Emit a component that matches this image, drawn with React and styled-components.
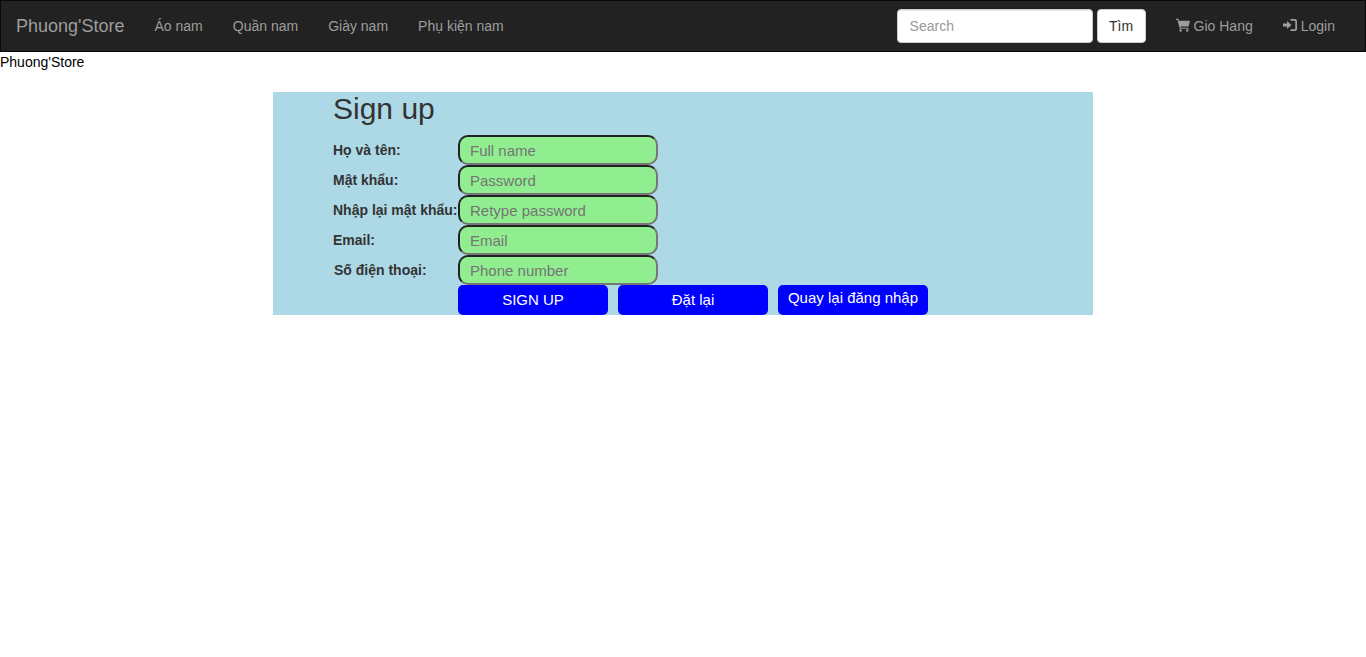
import React from 'react'
import styled, { createGlobalStyle } from 'styled-components'

const GlobalStyle = createGlobalStyle`
  * {
    box-sizing: border-box;
  }
  body {
    margin: 0;
    background: #fff;
    color: #333;
    font-family: "Liberation Sans", Arial, sans-serif;
    font-size: 14px;
    line-height: 20px;
  }
`

const Navbar = styled.nav`
  display: flex;
  align-items: center;
  height: 52px;
  padding-right: 15px;
  background: #222;
  border: 1px solid #080808;
`

const Brand = styled.a`
  padding: 15px;
  font-size: 18px;
  color: #9d9d9d;
`

const NavLink = styled.a`
  display: flex;
  align-items: center;
  gap: 4px;
  padding: 15px;
  color: #9d9d9d;
`

const NavGroup = styled.div`
  display: flex;
  align-items: center;
`

const RightGroup = styled(NavGroup)`
  margin-left: auto;
`

const SearchForm = styled.form`
  display: flex;
  gap: 4px;
  margin-right: 15px;
`

const SearchInput = styled.input`
  width: 196px;
  height: 34px;
  padding: 6px 12px;
  font: inherit;
  color: #555;
  background: #fff;
  border: 1px solid #ccc;
  border-radius: 4px;
  box-shadow: inset 0 1px 1px rgba(0, 0, 0, 0.075);

  &::placeholder {
    color: #999;
    opacity: 1;
  }
`

const SearchButton = styled.button`
  width: 49px;
  height: 34px;
  padding: 0;
  font: inherit;
  color: #333;
  background: #fff;
  border: 1px solid #ccc;
  border-radius: 4px;
`

const PageTitle = styled.div`
  color: #000;
  margin-bottom: 20px;
`

const Card = styled.section`
  width: 820px;
  margin-left: 273px;
  padding-left: 60px;
  background: lightblue;
`

const Heading = styled.h2`
  margin: 0 0 10px;
  font-size: 30px;
  font-weight: 500;
  line-height: 33px;
`

const Row = styled.div`
  display: flex;
  align-items: center;
  height: 30px;
`

const Label = styled.label`
  width: 125px;
  padding-left: ${props => props.$indent || 0}px;
  font-weight: 700;
  white-space: nowrap;
`

const Field = styled.input`
  width: 200px;
  height: 30px;
  padding: 1px 10px 0;
  font-family: inherit;
  font-size: 15px;
  background: lightgreen;
  border: 2px inset #767676;
  border-radius: 10px;

  &::placeholder {
    color: #757575;
    opacity: 1;
  }
`

const Actions = styled.div`
  display: flex;
  gap: 10px;
  padding-left: 125px;
`

const ActionButton = styled.button`
  width: 150px;
  height: 30px;
  padding: 0 0 ${props => (props.$raised ? 6 : 2)}px;
  font-family: inherit;
  font-size: 15px;
  color: #fff;
  background: blue;
  border: 0;
  border-radius: 5px;
`

const Glyph = styled.svg`
  width: 14px;
  height: 14px;
  margin-bottom: 2px;
  fill: currentColor;
`

const CartIcon = () => (
  <Glyph viewBox="0 0 14 14">
    <path d="M0 .8h2.300l.6 2H14l-1.500 5.700H4.500l.3 1.200h8v1.100H3.700L1.500 1.900H0z" />
    <circle cx="4.600" cy="12.500" r="1.200" />
    <circle cx="11.200" cy="12.500" r="1.200" />
  </Glyph>
)

const LoginIcon = () => (
  <Glyph viewBox="0 0 14 14">
    <path d="M0 5.600h4V3l4.400 4L4 11V8.400H0z" />
    <path d="M7.500 1H12a2 2 0 0 1 2 2v8a2 2 0 0 1-2 2H7.500v-1.700H11.500a.8.8 0 0 0 .8-.8V3.500a.8.8 0 0 0-.8-.8H7.500z" />
  </Glyph>
)

const navItems = ['Áo nam', 'Quần nam', 'Giày nam', 'Phụ kiện nam']

const fields = [
  { label: 'Họ và tên:', placeholder: 'Full name', type: 'text' },
  { label: 'Mật khẩu:', placeholder: 'Password', type: 'password' },
  { label: 'Nhập lại mật khẩu:', placeholder: 'Retype password', type: 'password' },
  { label: 'Email:', placeholder: 'Email', type: 'email' },
  { label: 'Số điện thoại:', placeholder: 'Phone number', type: 'text', indent: 1 },
]

export default function App() {
  return (
    <>
      <GlobalStyle />
      <Navbar>
        <Brand>Phuong'Store</Brand>
        <NavGroup>
          {navItems.map(item => (
            <NavLink key={item}>{item}</NavLink>
          ))}
        </NavGroup>
        <RightGroup>
          <SearchForm>
            <SearchInput placeholder="Search" />
            <SearchButton type="button">Tìm</SearchButton>
          </SearchForm>
          <NavLink>
            <CartIcon />
            Gio Hang
          </NavLink>
          <NavLink>
            <LoginIcon />
            Login
          </NavLink>
        </RightGroup>
      </Navbar>
      <PageTitle>Phuong'Store</PageTitle>
      <Card>
        <Heading>Sign up</Heading>
        {fields.map(field => (
          <Row key={field.label}>
            <Label $indent={field.indent}>{field.label}</Label>
            <Field type={field.type} placeholder={field.placeholder} />
          </Row>
        ))}
        <Actions>
          <ActionButton type="button">SIGN UP</ActionButton>
          <ActionButton type="button">Đặt lại</ActionButton>
          <ActionButton type="button" $raised>
            Quay lại đăng nhập
          </ActionButton>
        </Actions>
      </Card>
    </>
  )
}
